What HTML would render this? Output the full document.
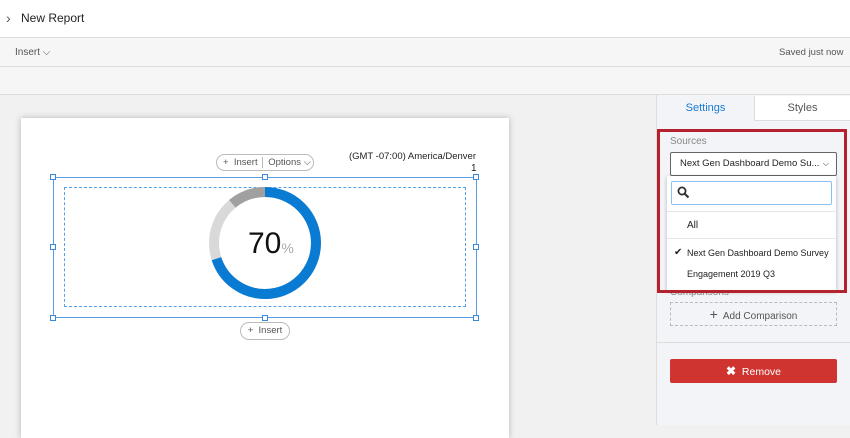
<!DOCTYPE html>
<html><head><style>
*{box-sizing:border-box;margin:0;padding:0}
body{width:850px;height:425px;overflow:hidden;background:#f1f1f1;font-family:"Liberation Sans",sans-serif;position:relative;color:#222}
.abs{position:absolute}
</style></head><body>
<div class="abs" style="left:0;top:0;width:850px;height:38px;background:#fff;border-bottom:1px solid #ddd"></div>
<div class="abs" style="left:6px;top:10px;font-size:14px;color:#555">&#x203A;</div>
<div class="abs" style="left:21px;top:11px;font-size:12px;color:#222">New Report</div>
<div class="abs" style="left:0;top:38px;width:850px;height:29px;background:#f6f6f6;border-bottom:1px solid #ddd"></div>
<div class="abs" style="left:15px;top:47px;font-size:10px;color:#555">Insert &#x2335;</div>
<div class="abs" style="left:779px;top:47px;font-size:9.5px;color:#555">Saved just now</div>
<div class="abs" style="left:0;top:67px;width:850px;height:28px;background:#f6f6f6;border-bottom:1px solid #ddd"></div>
<!-- page -->
<div class="abs" style="left:21px;top:118px;width:488px;height:320px;background:#fff;box-shadow:0 0 6px rgba(0,0,0,.25)"></div>
<div class="abs" style="left:300px;width:176px;text-align:right;top:151px;font-size:9.5px;color:#222;white-space:nowrap">(GMT -07:00) America/Denver</div>
<div class="abs" style="left:471px;top:163px;font-size:10px;color:#222">1</div>
<div class="abs" style="left:216px;top:154px;width:98px;height:17px;border:1px solid #bbb;border-radius:9px;background:#fff;font-size:9.5px;color:#555;line-height:15px;padding-left:6px">+&nbsp; Insert <span style="border-left:1px solid #bbb;padding-left:5px;margin-left:2px">Options &#x2335;</span></div>
<div class="abs" style="left:53px;top:177px;width:424px;height:141px;border:1px solid #5b9ee8"></div>
<div class="abs" style="left:64px;top:187px;width:402px;height:120px;border:1px dashed #5b9ee8"></div>
<div class="abs" style="left:50px;top:174px;width:6px;height:6px;border:1px solid #3b86e0;background:#fff"></div>
<div class="abs" style="left:262px;top:174px;width:6px;height:6px;border:1px solid #3b86e0;background:#fff"></div>
<div class="abs" style="left:473px;top:174px;width:6px;height:6px;border:1px solid #3b86e0;background:#fff"></div>
<div class="abs" style="left:50px;top:244px;width:6px;height:6px;border:1px solid #3b86e0;background:#fff"></div>
<div class="abs" style="left:473px;top:244px;width:6px;height:6px;border:1px solid #3b86e0;background:#fff"></div>
<div class="abs" style="left:50px;top:315px;width:6px;height:6px;border:1px solid #3b86e0;background:#fff"></div>
<div class="abs" style="left:262px;top:315px;width:6px;height:6px;border:1px solid #3b86e0;background:#fff"></div>
<div class="abs" style="left:473px;top:315px;width:6px;height:6px;border:1px solid #3b86e0;background:#fff"></div>
<svg class="abs" style="left:205px;top:183px" width="120" height="120" viewBox="0 0 120 120">
<g transform="rotate(-90 60 60)" fill="none" stroke-width="10">
<circle cx="60" cy="60" r="51" stroke="#d9d9d9"/>
<circle cx="60" cy="60" r="51" stroke="#a0a0a0" stroke-dasharray="0 284.5 36 0"/>
<circle cx="60" cy="60" r="51" stroke="#0a7bd2" stroke-dasharray="224 96.4"/>
</g></svg>
<div class="abs" style="left:248px;top:227px;font-size:30px;color:#111">70<span style="font-size:14px;color:#aaa">%</span></div>
<div class="abs" style="left:240px;top:322px;width:50px;height:18px;border:1px solid #bbb;border-radius:9px;background:#fff;font-size:9.5px;color:#555;line-height:16px;text-align:center">+&nbsp; Insert</div>
<!-- right panel -->
<div class="abs" style="left:656px;top:95px;width:194px;height:330px;background:#f3f4f8;border-left:1px solid #ddd"></div>
<div class="abs" style="left:657px;top:96px;width:97px;height:25px;font-size:11px;color:#1a7ad4;text-align:center;line-height:24px">Settings</div>
<div class="abs" style="left:754px;top:96px;width:96px;height:25px;background:#fff;border-left:1px solid #ddd;border-bottom:1px solid #ddd;font-size:11px;color:#555;text-align:center;line-height:24px">Styles</div>
<div class="abs" style="left:670px;top:136px;font-size:10px;color:#888">Sources</div>
<div class="abs" style="left:670px;top:152px;width:167px;height:24px;background:#fff;border:1px solid #666;border-radius:2px;font-size:9.5px;color:#222;line-height:22px;padding-left:9px;white-space:nowrap">Next Gen Dashboard Demo Su... <span style="position:absolute;right:7px;font-size:8px">&#x2335;</span></div>
<div class="abs" style="left:667px;top:176px;width:169px;height:115px;background:#fff;box-shadow:0 1px 4px rgba(0,0,0,.25)"></div>
<div class="abs" style="left:671px;top:181px;width:161px;height:24px;border:1px solid #8fc0ef;border-radius:2px;background:#fff"></div>
<svg class="abs" style="left:677px;top:186px" width="13" height="13" viewBox="0 0 13 13"><circle cx="5" cy="5" r="3.6" fill="none" stroke="#333" stroke-width="1.8"/><path d="M7.6 7.6L11.5 11.5" stroke="#333" stroke-width="2.2"/></svg>
<div class="abs" style="left:667px;top:211px;width:169px;border-top:1px solid #e6e6e6"></div>
<div class="abs" style="left:687px;top:220px;font-size:10px;color:#222">All</div>
<div class="abs" style="left:667px;top:238px;width:169px;border-top:1px solid #e6e6e6"></div>
<div class="abs" style="left:674px;top:247px;font-size:10px;color:#222">&#x2714;</div>
<div class="abs" style="left:687px;top:248px;font-size:9px;color:#222;white-space:nowrap">Next Gen Dashboard Demo Survey</div>
<div class="abs" style="left:687px;top:269px;font-size:9px;color:#222">Engagement 2019 Q3</div>
<div class="abs" style="left:657px;top:129px;width:190px;height:164px;border:3px solid #b5222d"></div>
<div class="abs" style="left:670px;top:293px;height:5px;overflow:hidden;font-size:10px;color:#888;line-height:0">Comparisons</div>
<div class="abs" style="left:670px;top:302px;width:167px;height:24px;border:1px dashed #bbb;font-size:10px;color:#555;text-align:center;line-height:22px"><span style="font-size:14px">+</span>&nbsp; Add Comparison</div>
<div class="abs" style="left:657px;top:342px;width:193px;border-top:1px solid #ddd"></div>
<div class="abs" style="left:670px;top:359px;width:167px;height:24px;background:#d03431;border-radius:2px;font-size:10.5px;color:#fff;text-align:center;line-height:24px"><b style="font-size:12px">&#x2716;</b>&nbsp; Remove</div>
</body></html>
